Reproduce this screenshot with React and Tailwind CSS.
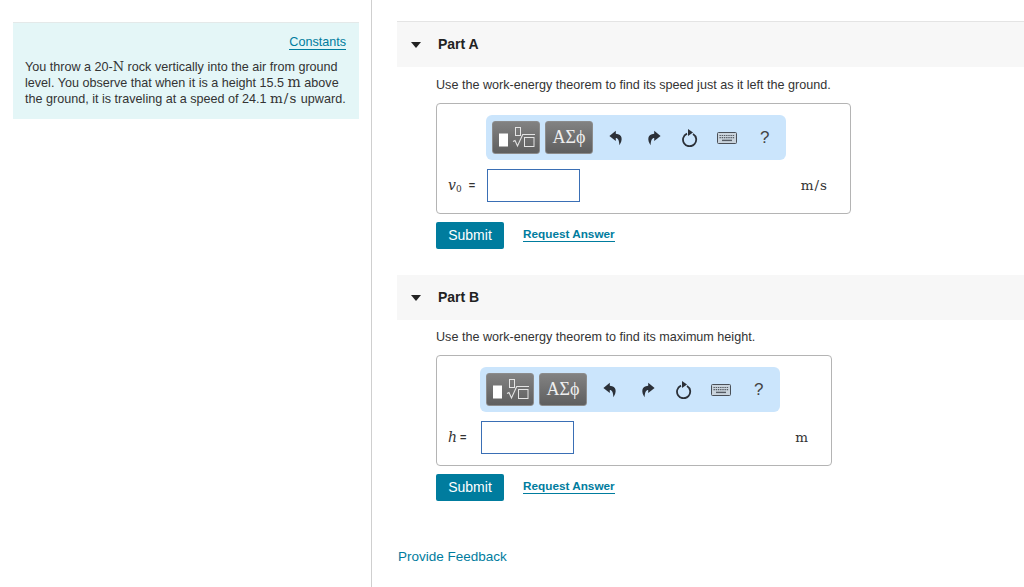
import React from "react";

const sans = "font-['Liberation_Sans',Arial,sans-serif]";
const serif = "font-['Liberation_Serif','DejaVu_Serif',serif]";
const math = "font-['DejaVu_Serif',serif]";

const UndoIcon = ({ flip }) => (
  <svg width="14" height="16" viewBox="0 0 14 16" className={flip ? "-scale-x-100" : ""}>
    <path d="M6.8 0.8 L0.4 6 L6.8 11 L6.8 8 C9 8 10.2 10.2 10.4 15.2 C13.8 10.4 14 4.2 6.8 3.8 Z" fill="#2b3038" />
  </svg>
);

const ResetIcon = () => (
  <svg width="16" height="19" viewBox="0 0 16 19" fill="none">
    <path d="M11 6 A6.6 6.6 0 1 1 5 5.6" stroke="#2b3038" strokeWidth="1.8" />
    <path d="M6 1 L11 4.6 L6 8 Z" fill="#2b3038" />
  </svg>
);

const KeyboardIcon = () => (
  <svg width="20" height="12" viewBox="0 0 20 12">
    <rect x="0.5" y="0.5" width="19" height="11" rx="1" fill="#c9d3dc" stroke="#4a5058" />
    <path d="M2.5 3.5 H17.5 M2.5 5.7 H17.5" stroke="#555b63" strokeWidth="1.2" strokeDasharray="1.4 0.8" />
    <path d="M5 8.4 H15" stroke="#555b63" strokeWidth="1.4" />
  </svg>
);

const TemplateIcon = () => (
  <svg width="42" height="29" viewBox="0 0 42 29" fill="none">
    <rect x="4" y="10.5" width="9" height="13" fill="#fff" />
    <rect x="20.5" y="4.5" width="5" height="8" stroke="#e4e4e4" />
    <path d="M18 18.5 L20 17.5 L22.5 23 L27.7 11.5 H40" stroke="#e4e4e4" strokeWidth="1.1" />
    <rect x="29.5" y="14.5" width="9.5" height="9" stroke="#e4e4e4" />
  </svg>
);

const Toolbar = ({ className }) => (
  <div className={`flex h-[45px] w-[300px] items-center rounded-md bg-[#cbe5fc] pl-[6px] ${className}`}>
    <div className="flex h-[33px] w-[48px] items-center justify-center rounded-[3px] border border-[#8c8c8c] bg-gradient-to-b from-[#828282] to-[#5f5f5f]">
      <TemplateIcon />
    </div>
    <div className={`ml-[5px] flex h-[33px] w-[48px] items-center justify-center rounded-[3px] border border-[#8c8c8c] bg-gradient-to-b from-[#828282] to-[#5f5f5f] text-[18px] text-[#eeeeee] ${serif}`}>
      ΑΣϕ
    </div>
    <div className="ml-[16px] flex w-[14px] justify-center"><UndoIcon /></div>
    <div className="ml-[24px] flex w-[14px] justify-center"><UndoIcon flip /></div>
    <div className="ml-[21px] flex w-[16px] justify-center"><ResetIcon /></div>
    <div className="ml-[19px] flex w-[20px] justify-center"><KeyboardIcon /></div>
    <div className={`ml-[23px] text-[17px] leading-none text-[#444444] ${sans}`}>?</div>
  </div>
);

const Part = ({ title, prompt, promptGap, boxWidth, toolbarOffset, labelWidth, label, unit }) => (
  <section>
    <div className="flex h-[45px] items-center bg-[#f7f7f7]">
      <div className="ml-[14px] h-0 w-0 border-x-[5px] border-t-[6px] border-x-transparent border-t-[#222222]" />
      <h2 className="ml-[17px] text-[14px] font-bold text-[#222222]">{title}</h2>
    </div>
    <div className="pl-[39px]">
      <p className={`h-[19px] text-[12.6px] leading-[18px] text-[#333333] ${promptGap}`}>{prompt}</p>
      <div className={`mt-[8px] h-[111px] rounded-[4px] border border-[#b4b4b4] pt-[11px] ${boxWidth}`}>
        <Toolbar className={toolbarOffset} />
        <div className="mt-[9px] flex items-center">
          <div className={`flex h-[33px] items-center pl-[11px] ${labelWidth}`}>{label}</div>
          <div className="h-[33px] w-[93px] border border-[#3a6fb5] bg-white" />
          <div className={`ml-auto pr-[22px] text-[13.5px] tracking-[1px] text-[#333333] ${math}`}>{unit}</div>
        </div>
      </div>
      <div className="mt-[8px] flex items-center">
        <button className="h-[27px] w-[68px] rounded-[2px] bg-[#007c9e] text-[14px] text-white">Submit</button>
        <a className="mb-[2px] ml-[19px] border-b border-[#007c9e] text-[11.75px] leading-[14px] font-bold text-[#007c9e]">Request Answer</a>
      </div>
    </div>
  </section>
);

export default function App() {
  return (
    <div className={`flex h-[587px] w-[1024px] overflow-hidden bg-white ${sans}`}>
      <aside className="h-full w-[372px] shrink-0 border-r border-[#cfcfcf] pt-[22px] pl-[13px]">
        <div className="h-[97px] w-[346px] border-t border-[#e4e9e9] bg-[#e4f6f7] px-[12px] pt-[11px] text-[12.6px] leading-[16px] text-[#333333]">
          <div className="pr-[1px] text-right">
            <a className="border-b border-[#007c9e] text-[#007c9e]">Constants</a>
          </div>
          <p className="mt-[9px] whitespace-nowrap">
            You throw a 20-<span className={`text-[13px] leading-none ${math}`}>N</span> rock vertically into the air from ground
            <br />
            level. You observe that when it is a height 15.5 <span className={`text-[14px] leading-none ${math}`}>m</span> above
            <br />
            the ground, it is traveling at a speed of 24.1 <span className={`text-[13.5px] leading-none tracking-[1px] ${math}`}>m/s</span> upward.
          </p>
        </div>
      </aside>
      <main className="ml-[25px] flex-1 pt-[21px]">
        <div className="border-t border-[#e4e4e4]">
          <Part
            title="Part A"
            prompt="Use the work-energy theorem to find its speed just as it left the ground."
            promptGap="mt-[9px]"
            boxWidth="w-[415px]"
            toolbarOffset="ml-[49px]"
            labelWidth="w-[50px]"
            label={
              <span className="flex items-center text-[#333333]">
                <span className={`text-[14px] ${math}`}><i>v</i><sub className="text-[9px]">0</sub></span>
                <span className="ml-[7px] text-[11px] font-bold">=</span>
              </span>
            }
            unit="m/s"
          />
        </div>
        <div className="mt-[26px]">
          <Part
            title="Part B"
            prompt="Use the work-energy theorem to find its maximum height."
            promptGap="mt-[8px]"
            boxWidth="w-[396px]"
            toolbarOffset="ml-[43px]"
            labelWidth="w-[44px]"
            label={
              <span className="flex items-center text-[#333333]">
                <span className={`text-[14px] ${math}`}><i>h</i></span>
                <span className="ml-[3px] text-[11px] font-bold">=</span>
              </span>
            }
            unit="m"
          />
        </div>
        <a className="mt-[47px] ml-[1px] block text-[13.5px] leading-[18px] text-[#007c9e]">Provide Feedback</a>
      </main>
    </div>
  );
}
